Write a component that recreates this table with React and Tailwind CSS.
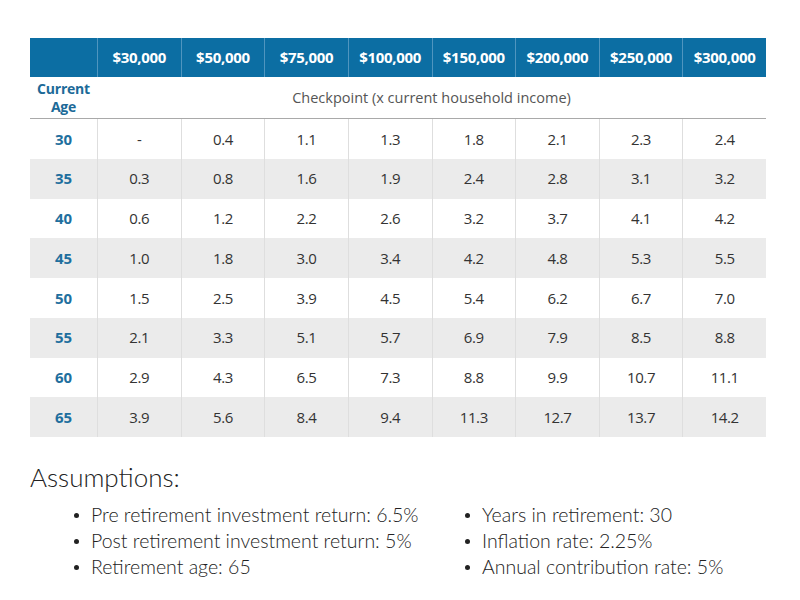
import React from 'react';

const incomes = ['$30,000', '$50,000', '$75,000', '$100,000', '$150,000', '$200,000', '$250,000', '$300,000'];

const rows = [
  { age: 30, values: ['-', '0.4', '1.1', '1.3', '1.8', '2.1', '2.3', '2.4'] },
  { age: 35, values: ['0.3', '0.8', '1.6', '1.9', '2.4', '2.8', '3.1', '3.2'] },
  { age: 40, values: ['0.6', '1.2', '2.2', '2.6', '3.2', '3.7', '4.1', '4.2'] },
  { age: 45, values: ['1.0', '1.8', '3.0', '3.4', '4.2', '4.8', '5.3', '5.5'] },
  { age: 50, values: ['1.5', '2.5', '3.9', '4.5', '5.4', '6.2', '6.7', '7.0'] },
  { age: 55, values: ['2.1', '3.3', '5.1', '5.7', '6.9', '7.9', '8.5', '8.8'] },
  { age: 60, values: ['2.9', '4.3', '6.5', '7.3', '8.8', '9.9', '10.7', '11.1'] },
  { age: 65, values: ['3.9', '5.6', '8.4', '9.4', '11.3', '12.7', '13.7', '14.2'] },
];

const leftAssumptions = [
  'Pre retirement investment return: 6.5%',
  'Post retirement investment return: 5%',
  'Retirement age: 65',
];

const rightAssumptions = [
  'Years in retirement: 30',
  'Inflation rate: 2.25%',
  'Annual contribution rate: 5%',
];

const AssumptionList = ({ items, className }) => (
  <ul className={className}>
    {items.map((item) => (
      <li key={item} className="flex items-center h-[26px]">
        <span className="w-[5px] h-[5px] rounded-full bg-[#222] mr-[12px] ml-[3px]"></span>
        <span>{item}</span>
      </li>
    ))}
  </ul>
);

export default function App() {
  return (
    <div className="w-[800px] h-[600px] bg-white pt-[38px] pl-[30px]">
      {/* Checkpoint table */}
      <div className="w-[736px] font-['Open_Sans',sans-serif] text-[15px]">
        <div className="grid grid-cols-[67px_repeat(8,1fr)] h-[39px] bg-[#0c6ea3] text-white font-bold">
          <div></div>
          {incomes.map((inc) => (
            <div key={inc} className="flex items-center justify-center border-l border-[#4f95bf] tracking-[-0.3px]">
              {inc}
            </div>
          ))}
        </div>

        <div className="grid grid-cols-[67px_1fr] h-[42px] border-b border-[#a9a9a9]">
          <div className="flex flex-col items-center justify-center text-[#1c6a98] font-bold text-[14px] leading-[18px] tracking-[-0.2px]">
            <span>Current</span>
            <span>Age</span>
          </div>
          <div className="flex items-center justify-center text-[#555] text-[14.5px]">
            Checkpoint (x current household income)
          </div>
        </div>

        {rows.map((row, i) => (
          <div
            key={row.age}
            className={`grid grid-cols-[67px_repeat(8,1fr)] h-[39.75px] ${i % 2 === 1 ? 'bg-[#ebebeb]' : 'bg-white'}`}
          >
            <div className="flex items-center justify-center text-[#1f6f9e] font-bold">{row.age}</div>
            {row.values.map((v, j) => (
              <div key={j} className="flex items-center justify-center border-l border-[#dedede] text-[#333] tracking-[-0.4px]">
                {v}
              </div>
            ))}
          </div>
        ))}
      </div>

      {/* Assumptions */}
      <div className="font-['Lato',sans-serif] text-[#222] font-light">
        <div className="mt-[23px] text-[26px] leading-[34px]">Assumptions:</div>
        <div className="flex mt-[8px] text-[19.5px]">
          <AssumptionList items={leftAssumptions} className="w-[432px] pl-[41px]" />
          <AssumptionList items={rightAssumptions} className="" />
        </div>
      </div>
    </div>
  );
}
